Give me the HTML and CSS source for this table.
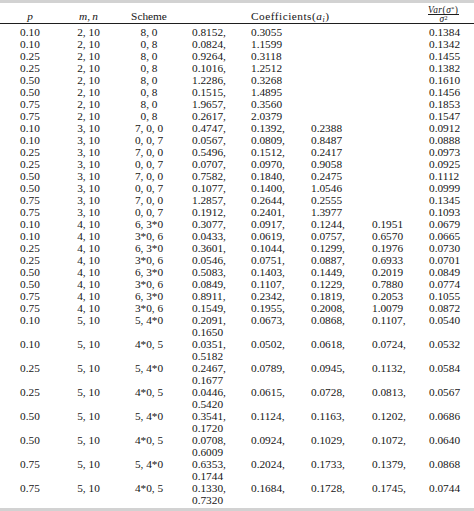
FILE: index.html
```html
<!DOCTYPE html>
<html>
<head>
<meta charset="utf-8">
<link rel="stylesheet" href="styles.css">
</head>
<body>
<div class="page">
  <div class="bar"></div>
  <main class="content">
    <table class="tbl">
      <colgroup>
        <col class="w-p"><col class="w-mn"><col class="w-sch"><col class="w-c1"><col class="w-c2"><col class="w-c3"><col class="w-c4"><col class="w-var">
      </colgroup>
      <thead>
        <tr>
          <th class="ctr"><i>p</i></th>
          <th class="ctr"><i>m</i>,&thinsp;<i>n</i></th>
          <th class="ctr">Scheme</th>
          <th class="coef" colspan="4">Coefficients(<i>a</i><sub>i</sub>)</th>
          <th class="varh">
            <span class="frac"><span class="num"><i>Var</i>(<i>σ</i><sup>*</sup>)</span><span class="den"><i>σ</i><sup>2</sup></span></span>
          </th>
        </tr>
      </thead>
      <tbody>
        <tr class="first"><td class="ctr">0.10</td><td class="ctr">2, 10</td><td class="ctr">8, 0</td><td>0.8152,</td><td>0.3055</td><td></td><td></td><td>0.1384</td></tr>
        <tr><td class="ctr">0.10</td><td class="ctr">2, 10</td><td class="ctr">0, 8</td><td>0.0824,</td><td>1.1599</td><td></td><td></td><td>0.1342</td></tr>
        <tr><td class="ctr">0.25</td><td class="ctr">2, 10</td><td class="ctr">8, 0</td><td>0.9264,</td><td>0.3118</td><td></td><td></td><td>0.1455</td></tr>
        <tr><td class="ctr">0.25</td><td class="ctr">2, 10</td><td class="ctr">0, 8</td><td>0.1016,</td><td>1.2512</td><td></td><td></td><td>0.1382</td></tr>
        <tr><td class="ctr">0.50</td><td class="ctr">2, 10</td><td class="ctr">8, 0</td><td>1.2286,</td><td>0.3268</td><td></td><td></td><td>0.1610</td></tr>
        <tr><td class="ctr">0.50</td><td class="ctr">2, 10</td><td class="ctr">0, 8</td><td>0.1515,</td><td>1.4895</td><td></td><td></td><td>0.1456</td></tr>
        <tr><td class="ctr">0.75</td><td class="ctr">2, 10</td><td class="ctr">8, 0</td><td>1.9657,</td><td>0.3560</td><td></td><td></td><td>0.1853</td></tr>
        <tr><td class="ctr">0.75</td><td class="ctr">2, 10</td><td class="ctr">0, 8</td><td>0.2617,</td><td>2.0379</td><td></td><td></td><td>0.1547</td></tr>

        <tr><td class="ctr">0.10</td><td class="ctr">3, 10</td><td class="ctr">7, 0, 0</td><td>0.4747,</td><td>0.1392,</td><td>0.2388</td><td></td><td>0.0912</td></tr>
        <tr><td class="ctr">0.10</td><td class="ctr">3, 10</td><td class="ctr">0, 0, 7</td><td>0.0567,</td><td>0.0809,</td><td>0.8487</td><td></td><td>0.0888</td></tr>
        <tr><td class="ctr">0.25</td><td class="ctr">3, 10</td><td class="ctr">7, 0, 0</td><td>0.5496,</td><td>0.1512,</td><td>0.2417</td><td></td><td>0.0973</td></tr>
        <tr><td class="ctr">0.25</td><td class="ctr">3, 10</td><td class="ctr">0, 0, 7</td><td>0.0707,</td><td>0.0970,</td><td>0.9058</td><td></td><td>0.0925</td></tr>
        <tr><td class="ctr">0.50</td><td class="ctr">3, 10</td><td class="ctr">7, 0, 0</td><td>0.7582,</td><td>0.1840,</td><td>0.2475</td><td></td><td>0.1112</td></tr>
        <tr><td class="ctr">0.50</td><td class="ctr">3, 10</td><td class="ctr">0, 0, 7</td><td>0.1077,</td><td>0.1400,</td><td>1.0546</td><td></td><td>0.0999</td></tr>
        <tr><td class="ctr">0.75</td><td class="ctr">3, 10</td><td class="ctr">7, 0, 0</td><td>1.2857,</td><td>0.2644,</td><td>0.2555</td><td></td><td>0.1345</td></tr>
        <tr><td class="ctr">0.75</td><td class="ctr">3, 10</td><td class="ctr">0, 0, 7</td><td>0.1912,</td><td>0.2401,</td><td>1.3977</td><td></td><td>0.1093</td></tr>

        <tr><td class="ctr">0.10</td><td class="ctr">4, 10</td><td class="ctr">6, 3*0</td><td>0.3077,</td><td>0.0917,</td><td>0.1244,</td><td>0.1951</td><td>0.0679</td></tr>
        <tr><td class="ctr">0.10</td><td class="ctr">4, 10</td><td class="ctr">3*0, 6</td><td>0.0433,</td><td>0.0619,</td><td>0.0757,</td><td>0.6570</td><td>0.0665</td></tr>
        <tr><td class="ctr">0.25</td><td class="ctr">4, 10</td><td class="ctr">6, 3*0</td><td>0.3601,</td><td>0.1044,</td><td>0.1299,</td><td>0.1976</td><td>0.0730</td></tr>
        <tr><td class="ctr">0.25</td><td class="ctr">4, 10</td><td class="ctr">3*0, 6</td><td>0.0546,</td><td>0.0751,</td><td>0.0887,</td><td>0.6933</td><td>0.0701</td></tr>
        <tr><td class="ctr">0.50</td><td class="ctr">4, 10</td><td class="ctr">6, 3*0</td><td>0.5083,</td><td>0.1403,</td><td>0.1449,</td><td>0.2019</td><td>0.0849</td></tr>
        <tr><td class="ctr">0.50</td><td class="ctr">4, 10</td><td class="ctr">3*0, 6</td><td>0.0849,</td><td>0.1107,</td><td>0.1229,</td><td>0.7880</td><td>0.0774</td></tr>
        <tr><td class="ctr">0.75</td><td class="ctr">4, 10</td><td class="ctr">6, 3*0</td><td>0.8911,</td><td>0.2342,</td><td>0.1819,</td><td>0.2053</td><td>0.1055</td></tr>
        <tr><td class="ctr">0.75</td><td class="ctr">4, 10</td><td class="ctr">3*0, 6</td><td>0.1549,</td><td>0.1955,</td><td>0.2008,</td><td>1.0079</td><td>0.0872</td></tr>

        <tr><td class="ctr">0.10</td><td class="ctr">5, 10</td><td class="ctr">5, 4*0</td><td>0.2091,<br>0.1650</td><td>0.0673,</td><td>0.0868,</td><td>0.1107,</td><td>0.0540</td></tr>
        <tr><td class="ctr">0.10</td><td class="ctr">5, 10</td><td class="ctr">4*0, 5</td><td>0.0351,<br>0.5182</td><td>0.0502,</td><td>0.0618,</td><td>0.0724,</td><td>0.0532</td></tr>
        <tr><td class="ctr">0.25</td><td class="ctr">5, 10</td><td class="ctr">5, 4*0</td><td>0.2467,<br>0.1677</td><td>0.0789,</td><td>0.0945,</td><td>0.1132,</td><td>0.0584</td></tr>
        <tr><td class="ctr">0.25</td><td class="ctr">5, 10</td><td class="ctr">4*0, 5</td><td>0.0446,<br>0.5420</td><td>0.0615,</td><td>0.0728,</td><td>0.0813,</td><td>0.0567</td></tr>
        <tr><td class="ctr">0.50</td><td class="ctr">5, 10</td><td class="ctr">5, 4*0</td><td>0.3541,<br>0.1720</td><td>0.1124,</td><td>0.1163,</td><td>0.1202,</td><td>0.0686</td></tr>
        <tr><td class="ctr">0.50</td><td class="ctr">5, 10</td><td class="ctr">4*0, 5</td><td>0.0708,<br>0.6009</td><td>0.0924,</td><td>0.1029,</td><td>0.1072,</td><td>0.0640</td></tr>
        <tr><td class="ctr">0.75</td><td class="ctr">5, 10</td><td class="ctr">5, 4*0</td><td>0.6353,<br>0.1744</td><td>0.2024,</td><td>0.1733,</td><td>0.1379,</td><td>0.0868</td></tr>
        <tr><td class="ctr">0.75</td><td class="ctr">5, 10</td><td class="ctr">4*0, 5</td><td>0.1330,<br>0.7320</td><td>0.1684,</td><td>0.1728,</td><td>0.1745,</td><td>0.0744</td></tr>
      </tbody>
    </table>
  </main>
  <div class="bar"></div>
</div>
</body>
</html>
```

FILE: styles.css
```css
html, body {
  margin: 0;
  padding: 0;
  background: #ffffff;
}

.page {
  width: 474px;
  height: 511px;
  overflow: hidden;
  display: grid;
  grid-template-rows: 3px 1fr 3px;
  font-family: "Liberation Serif", "Times New Roman", serif;
  color: #151515;
}

.bar {
  background: #d2d2d2;
}

.content {
  overflow: hidden;
}

.tbl {
  width: 474px;
  table-layout: fixed;
  border-collapse: collapse;
  font-size: 11.3px;
  line-height: 12px;
}

.w-p { width: 60px; }
.w-mn { width: 57px; }
.w-sch { width: 64px; }
.w-c1 { width: 59px; }
.w-c2 { width: 60px; }
.w-c3 { width: 61px; }
.w-c4 { width: 57px; }
.w-var { width: 56px; }

.tbl th {
  font-weight: normal;
  height: 16px;
  padding: 0 0 1px 0;
  vertical-align: bottom;
  white-space: nowrap;
  border-bottom: 1px solid #1e1e1e;
}

.tbl td {
  padding: 0 0 0 11px;
  vertical-align: top;
  text-align: left;
  white-space: nowrap;
}

.tbl td.ctr,
.tbl th.ctr {
  padding-left: 0;
  text-align: center;
}

.tbl tr.first td {
  padding-top: 2px;
}

.tbl th.coef {
  text-align: left;
  padding-left: 70px;
  letter-spacing: 0.5px;
}

.tbl sub {
  font-size: 8px;
  line-height: 0;
  vertical-align: -2px;
  font-style: italic;
}

.tbl th.varh {
  text-align: left;
  vertical-align: top;
  padding: 0 0 0 10px;
}

.frac {
  display: inline-flex;
  flex-direction: column;
  align-items: center;
  font-size: 9.4px;
  letter-spacing: 0.5px;
}

.num {
  line-height: 7px;
  padding: 0 1px 0 0;
  border-bottom: 1px solid #1e1e1e;
}

.den {
  line-height: 7px;
  padding-top: 1px;
}

.frac sup {
  font-size: 6px;
  line-height: 0;
  vertical-align: 2px;
}
```
